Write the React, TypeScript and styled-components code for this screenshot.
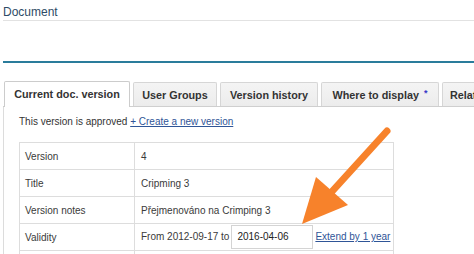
import styled, { createGlobalStyle } from "styled-components";

const GlobalStyle = createGlobalStyle`
  html, body {
    margin: 0;
    padding: 0;
    background: #ffffff;
    overflow: hidden;
  }
  body {
    font-family: "Liberation Sans", Arial, sans-serif;
  }
`;

const Page = styled.div`
  position: relative;
  width: 474px;
  height: 254px;
  padding-left: 3px;
  box-sizing: border-box;
  overflow: hidden;
`;

const Header = styled.div`
  height: 21px;
  padding-top: 5px;
  box-sizing: border-box;
  border-bottom: 1px solid #e2e2e2;
  font-size: 12px;
  line-height: 14px;
  color: #2e4b66;
`;

const Rule = styled.div`
  margin-top: 40px;
  height: 2px;
  background: #2a7c9b;
`;

const TabBar = styled.div`
  display: flex;
  align-items: flex-end;
  gap: 3px;
  margin-top: 18px;
  padding-left: 1px;
  height: 25px;
  border-bottom: 1px solid #cfcfcf;
`;

const Tab = styled.div<{ $active?: boolean; $width: number }>`
  flex: none;
  width: ${(p) => p.$width}px;
  height: ${(p) => (p.$active ? 26 : 24)}px;
  margin-bottom: ${(p) => (p.$active ? -1 : 0)}px;
  box-sizing: border-box;
  display: flex;
  align-items: center;
  justify-content: ${(p) => (p.$width > 80 ? "center" : "flex-start")};
  padding-left: ${(p) => (p.$width > 80 ? 0 : 7)}px;
  padding-bottom: ${(p) => (p.$active ? 1 : 0)}px;
  border: 1px solid ${(p) => (p.$active ? "#cccccc" : "#d6d6d6")};
  border-bottom: none;
  border-radius: 2px 2px 0 0;
  background: ${(p) =>
    p.$active ? "#ffffff" : "linear-gradient(#f4f4f4, #ececec)"};
  font-size: 10.8px;
  font-weight: 700;
  color: #333333;
  white-space: nowrap;
  overflow: hidden;
`;

const Star = styled.span`
  color: #3636c8;
  font-size: 9px;
  margin-left: 5px;
  position: relative;
  top: -2px;
`;

const Panel = styled.div`
  border-left: 1px solid #dcdcdc;
  padding: 9px 0 0 15px;
  height: 200px;
`;

const Note = styled.div`
  font-size: 10px;
  line-height: 12px;
  color: #333333;
`;

const Link = styled.a`
  color: #2f5597;
  text-decoration: underline;
  cursor: pointer;
`;

const Table = styled.table`
  margin-top: 14px;
  width: 375px;
  border-collapse: collapse;
  font-size: 10px;
  color: #3a3a3a;
`;

const Row = styled.tr`
  height: 27px;
`;

const Label = styled.td`
  width: 115px;
  padding: 0 0 0 5px;
  border: 1px solid #dddddd;
  box-sizing: border-box;
`;

const Value = styled.td`
  padding: 0 0 0 6px;
  border: 1px solid #dddddd;
  white-space: nowrap;
`;

const DateBox = styled.span`
  display: inline-block;
  width: 82px;
  height: 24px;
  margin-left: 2px;
  margin-right: 2px;
  padding-left: 5px;
  box-sizing: border-box;
  border: 1px solid #d4d4d4;
  line-height: 22px;
  color: #222222;
  vertical-align: middle;
`;

const Arrow = styled.svg`
  position: absolute;
  left: 0;
  top: 0;
  pointer-events: none;
`;

export default function App() {
  return (
    <>
      <GlobalStyle />
      <Page>
        <Header>Document</Header>
        <Rule />
        <TabBar>
          <Tab $active $width={126}>Current doc. version</Tab>
          <Tab $width={84}>User Groups</Tab>
          <Tab $width={98}>Version history</Tab>
          <Tab $width={118}>
            Where to display<Star>*</Star>
          </Tab>
          <Tab $width={60}>Related</Tab>
        </TabBar>
        <Panel>
          <Note>
            This version is approved <Link>+ Create a new version</Link>
          </Note>
          <Table>
            <tbody>
              <Row>
                <Label>Version</Label>
                <Value>4</Value>
              </Row>
              <Row>
                <Label>Title</Label>
                <Value>Cripming 3</Value>
              </Row>
              <Row>
                <Label>Version notes</Label>
                <Value>Přejmenováno na Crimping 3</Value>
              </Row>
              <Row>
                <Label>Validity</Label>
                <Value>
                  From 2012-09-17 to<DateBox>2016-04-06</DateBox>
                  <Link>Extend by 1 year</Link>
                </Value>
              </Row>
              <Row>
                <Label />
                <Value />
              </Row>
            </tbody>
          </Table>
        </Panel>
        <Arrow width="474" height="254" viewBox="0 0 474 254">
          <line
            x1="387"
            y1="131"
            x2="327"
            y2="197"
            stroke="#f7822b"
            strokeWidth="7"
            strokeLinecap="round"
          />
          <polygon points="302,224 316,177 348,205" fill="#f7822b" />
        </Arrow>
      </Page>
    </>
  );
}
